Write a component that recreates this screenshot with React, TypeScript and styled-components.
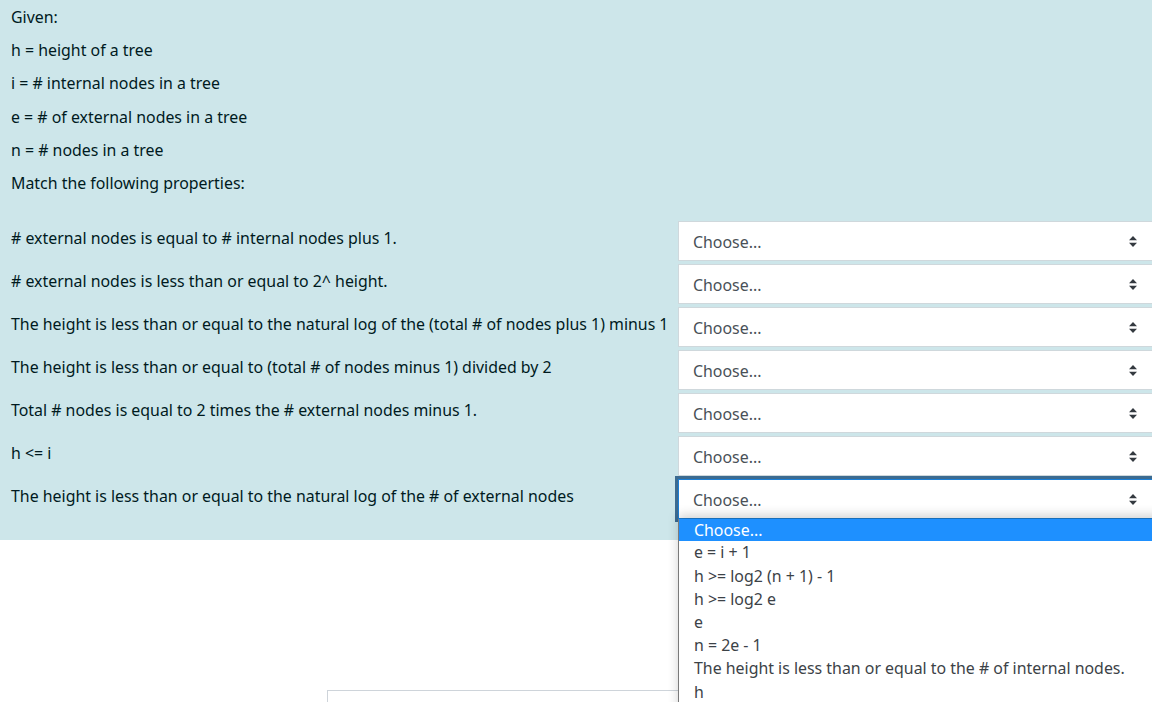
import styled, { createGlobalStyle } from "styled-components";

const GlobalStyle = createGlobalStyle`
  html, body {
    margin: 0;
    padding: 0;
    overflow: hidden;
    background: #ffffff;
  }
  body {
    font-family: "Noto Sans", "Open Sans", sans-serif;
    font-size: 15.9px;
  }
`;

const Page = styled.div`
  width: 1180px;
  height: 702px;
  overflow: hidden;
`;

const Formulation = styled.div`
  background: #cde6ea;
  color: #001a1e;
  padding: 6px 0 21px 11px;
`;

const Para = styled.p`
  margin: 0 0 10.8px;
  line-height: 22.4px;
`;

const MatchTable = styled.div`
  display: grid;
  grid-template-columns: 667px 482px;
  grid-auto-rows: 40px;
  row-gap: 3px;
  margin-top: 27px;
`;

const Prompt = styled.div`
  padding-top: 6px;
  line-height: 22px;
  white-space: nowrap;
`;

const SelectWrap = styled.div`
  position: relative;
`;

const SelectBox = styled.div<{ focused?: boolean }>`
  box-sizing: border-box;
  height: 40px;
  display: flex;
  align-items: center;
  justify-content: space-between;
  padding: 1px 22px 0 14px;
  background: #ffffff;
  border: 1px solid ${(p) => (p.focused ? "#1c7fd6" : "#cfd8dc")};
  box-shadow: ${(p) => (p.focused ? "0 0 0 3px #3c6b91" : "none")};
  color: #495057;
`;

const Arrow = () => (
  <svg width="8" height="11" viewBox="0 0 8 11">
    <path d="M4 0L0 4.2h8zM4 11L0 6.8h8z" fill="#343a40" />
  </svg>
);

const Dropdown = styled.div`
  position: absolute;
  left: 0;
  top: 40px;
  width: 520px;
  height: 200px;
  background: #ffffff;
  border-left: 1px solid #7a7a7a;
  box-shadow: 0 -4px 10px rgba(0, 0, 0, 0.18);
  z-index: 5;
`;

const Option = styled.div<{ active?: boolean }>`
  height: ${(p) => (p.active ? "22px" : "23.2px")};
  line-height: ${(p) => (p.active ? "22px" : "23.2px")};
  padding-left: 15px;
  color: ${(p) => (p.active ? "#ffffff" : "#3c4247")};
  background: ${(p) => (p.active ? "#1e90ff" : "transparent")};
  white-space: nowrap;
`;

const Below = styled.div`
  margin: 150px 0 0 327px;
  height: 40px;
  width: 400px;
  border-top: 1px solid #ced4da;
  border-left: 1px solid #ced4da;
`;

const givens = [
  "Given:",
  "h = height of a tree",
  "i = # internal nodes in a tree",
  "e = # of external nodes in a tree",
  "n = # nodes in a tree",
  "Match the following properties:",
];

const prompts = [
  "# external nodes is equal to # internal nodes plus 1.",
  "# external nodes is less than or equal to 2^ height.",
  "The height is less than or equal to the natural log of the (total # of nodes plus 1) minus 1",
  "The height is less than or equal to (total # of nodes minus 1) divided by 2",
  "Total # nodes is equal to 2 times the # external nodes minus 1.",
  "h <= i",
  "The height is less than or equal to the natural log of the # of external nodes",
];

const options = [
  "Choose...",
  "e = i + 1",
  "h >= log2 (n + 1) - 1",
  "h >= log2 e",
  "e",
  "n = 2e - 1",
  "The height is less than or equal to the # of internal nodes.",
  "h",
];

export default function App() {
  return (
    <Page>
      <GlobalStyle />
      <Formulation>
        {givens.map((g) => (
          <Para key={g}>{g}</Para>
        ))}
        <MatchTable>
          {prompts.map((p, i) => {
            const open = i === prompts.length - 1;
            return [
              <Prompt key={`p${i}`}>{p}</Prompt>,
              <SelectWrap key={`s${i}`}>
                <SelectBox focused={open}>
                  <span>Choose...</span>
                  <Arrow />
                </SelectBox>
                {open && (
                  <Dropdown>
                    {options.map((o, j) => (
                      <Option key={o} active={j === 0}>
                        {o}
                      </Option>
                    ))}
                  </Dropdown>
                )}
              </SelectWrap>,
            ];
          })}
        </MatchTable>
      </Formulation>
      <Below />
    </Page>
  );
}
